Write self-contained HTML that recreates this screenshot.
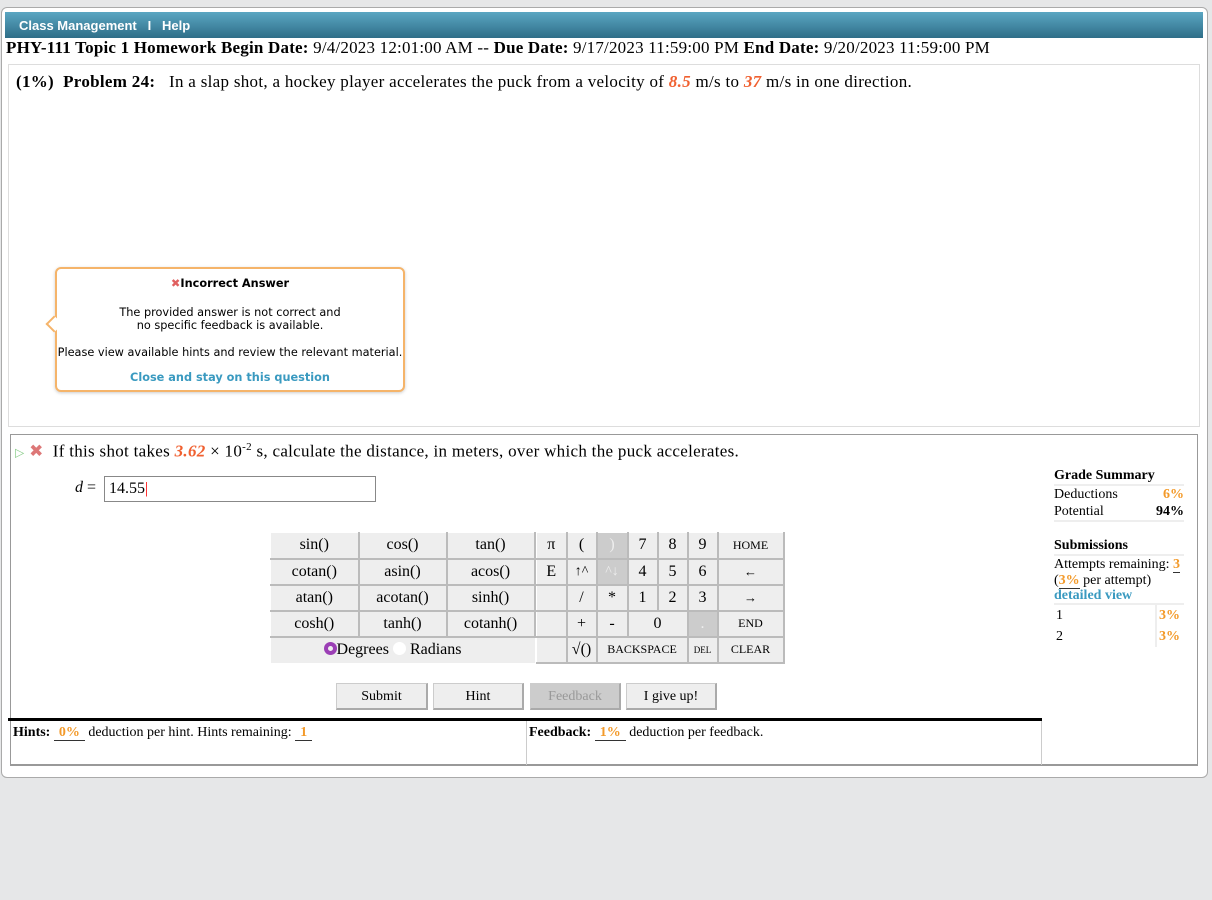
<!DOCTYPE html>
<html><head><style>
*{box-sizing:border-box}
body{margin:0;width:1212px;height:900px;background:#e6e7e8;font-family:"Liberation Serif",serif;position:relative;overflow:hidden}
.a{position:absolute}
.outer{left:1px;top:7px;width:1207px;height:771px;background:#fff;border:1px solid #aaa;border-radius:6px}
.hdr{left:5px;top:12px;width:1198px;height:26px;background:linear-gradient(#5aa6c2,#2f6e88);color:#fff;font:bold 13px "Liberation Sans",sans-serif;padding:6px 0 0 14px}
.ttl{left:6px;top:38px;font-size:17px;letter-spacing:0.2px;white-space:nowrap}
.box1{left:8px;top:64px;width:1192px;height:363px;border:1px solid #ddd}
.o{color:#f06030;font-style:italic;font-weight:bold}
.pop{left:55px;top:267px;width:350px;height:125px;border:2px solid #f5b46a;border-radius:6px;background:#fff;font:11.3px "DejaVu Sans",sans-serif;text-align:center;box-shadow:0 1px 3px #ccc}
.box2{left:10px;top:434px;width:1188px;height:332px;border:1px solid #999;border-bottom:2px solid #999}
table.k{border-collapse:collapse;position:absolute;table-layout:fixed}
table.k td{background:#eee;border:1px solid #fff;border-right:2px solid #bbb;border-bottom:2px solid #bbb;text-align:center;font-size:16px;padding:0;height:26px;overflow:hidden;white-space:nowrap}
.btn{position:absolute;top:683px;height:27px;background:#eee;border:1px solid #ccc;border-right:2px solid #aaa;border-bottom:2px solid #aaa;text-align:center;font-size:14px;padding-top:5px}
.u{color:#f39a2a;font-weight:bold;border-bottom:1px solid #333;padding:0 5px}
</style></head><body>
<div class="a outer"></div>
<div class="a hdr">Class Management &nbsp; I &nbsp; Help</div>
<div class="a ttl"><b>PHY-111 Topic 1 Homework Begin Date:</b> 9/4/2023 12:01:00 AM -- <b>Due Date:</b> 9/17/2023 11:59:00 PM <b>End Date:</b> 9/20/2023 11:59:00 PM</div>
<div class="a box1"></div>
<div class="a" style="left:16px;top:72px;font-size:17px;letter-spacing:0.3px;white-space:nowrap"><b>(1%) &nbsp;Problem 24:</b> &nbsp; In a slap shot, a hockey player accelerates the puck from a velocity of <span class="o">8.5</span> m/s to <span class="o">37</span> m/s in one direction.</div>
<div class="a pop">
<div style="margin-top:8px;font-weight:bold"><span style="color:#e06060">✖</span>Incorrect Answer</div>
<div style="margin-top:16px;line-height:13px">The provided answer is not correct and<br>no specific feedback is available.</div>
<div style="margin-top:14px;white-space:nowrap">Please view available hints and review the relevant material.</div>
<div style="margin-top:12px;color:#3a9ac0;font-weight:bold">Close and stay on this question</div>
</div>
<div class="a" style="left:48px;top:318px;width:12px;height:12px;background:#fff;border-left:2px solid #f5b46a;border-bottom:2px solid #f5b46a;transform:rotate(45deg)"></div>
<div class="a box2"></div>
<div class="a" style="left:15px;top:441px;font-size:17px;letter-spacing:0.3px;white-space:nowrap"><span style="color:#8c8;font-size:12px">▷</span> <span style="color:#d77">✖</span> &nbsp;If this shot takes <span class="o">3.62</span> × 10<sup style="font-size:11px">-2</sup> s, calculate the distance, in meters, over which the puck accelerates.</div>
<div class="a" style="left:75px;top:479px;font-size:16px"><i>d</i> =</div>
<div class="a" style="left:104px;top:476px;width:272px;height:26px;border:1px solid #888;font-size:16px;padding:3px 4px">14.55<span style="color:red">|</span></div>
<table class="k" style="left:270px;top:532px;width:264px">
<col style="width:88px"><col style="width:88px"><col style="width:88px">
<tr><td>sin()</td><td>cos()</td><td>tan()</td></tr>
<tr><td>cotan()</td><td>asin()</td><td>acos()</td></tr>
<tr><td>atan()</td><td>acotan()</td><td>sinh()</td></tr>
<tr><td>cosh()</td><td>tanh()</td><td>cotanh()</td></tr>
<tr><td colspan="3" style="border:none;text-align:center;padding-right:20px"><span style="display:inline-block;width:13px;height:13px;border-radius:50%;border:4px solid #9b3fb5;vertical-align:-1px"></span>Degrees <span style="display:inline-block;width:13px;height:13px;border-radius:50%;background:#fff;vertical-align:-1px"></span> Radians</td></tr>
</table>
<table class="k" style="left:536px;top:532px;width:247px">
<col style="width:30px"><col style="width:30px"><col style="width:31px"><col style="width:30px"><col style="width:30px"><col style="width:30px"><col style="width:66px">
<tr><td>π</td><td>(</td><td style="background:#ccc;color:#eee">)</td><td>7</td><td>8</td><td>9</td><td style="font-size:12px">HOME</td></tr>
<tr><td>E</td><td style="font-size:14px">↑^</td><td style="background:#ccc;color:#eee;font-size:14px">^↓</td><td>4</td><td>5</td><td>6</td><td style="font-size:13px">←</td></tr>
<tr><td></td><td>/</td><td>*</td><td>1</td><td>2</td><td>3</td><td style="font-size:13px">→</td></tr>
<tr><td></td><td>+</td><td>-</td><td colspan="2">0</td><td style="background:#ccc;color:#eee">.</td><td style="font-size:12px">END</td></tr>
<tr><td></td><td>√()</td><td colspan="3" style="font-size:12px">BACKSPACE</td><td style="font-size:9px">DEL</td><td style="font-size:12px">CLEAR</td></tr>
</table>
<div class="btn" style="left:336px;width:92px">Submit</div>
<div class="btn" style="left:433px;width:91px">Hint</div>
<div class="btn" style="left:530px;width:91px;background:#ccc;color:#999">Feedback</div>
<div class="btn" style="left:626px;width:91px">I give up!</div>
<div class="a" style="left:8px;top:718px;width:1034px;height:3px;background:#000"></div>
<div class="a" style="left:526px;top:721px;width:1px;height:44px;background:#ccc"></div>
<div class="a" style="left:1041px;top:721px;width:1px;height:44px;background:#ccc"></div>
<div class="a" style="left:13px;top:725px;font-size:14px;white-space:nowrap"><b>Hints:</b> <span class="u">0%</span> deduction per hint. Hints remaining: <span class="u">1</span></div>
<div class="a" style="left:529px;top:725px;font-size:14px;white-space:nowrap"><b>Feedback:</b> <span class="u">1%</span> deduction per feedback.</div>
<div class="a" style="left:1054px;top:467px;width:130px;font-size:14px;line-height:17px">
<div style="font-weight:bold;border-bottom:2px solid #eee">Grade Summary</div>
<div>Deductions<span style="float:right;color:#f39a2a;font-weight:bold">6%</span></div>
<div style="border-bottom:2px solid #eee">Potential<span style="float:right;font-weight:bold">94%</span></div>
<div style="font-weight:bold;border-bottom:2px solid #eee;margin-top:15px">Submissions</div>
<div style="white-space:nowrap">Attempts remaining: <span style="color:#f39a2a;font-weight:bold;border-bottom:1px solid #333">3</span></div>
<div style="line-height:15px">(<span style="color:#f39a2a;font-weight:bold;border-bottom:1px solid #333">3%</span> per attempt)</div>
<div style="color:#3a9ac0;font-weight:bold;border-bottom:2px solid #eee;line-height:15px">detailed view</div>
<div style="position:relative;line-height:21px;padding-left:2px">1<br>2<span style="position:absolute;left:101px;top:0;height:42px;border-left:2px solid #eee;padding-left:2px;color:#f39a2a;font-weight:bold">3%<br>3%</span></div>
</div>
</body></html>
